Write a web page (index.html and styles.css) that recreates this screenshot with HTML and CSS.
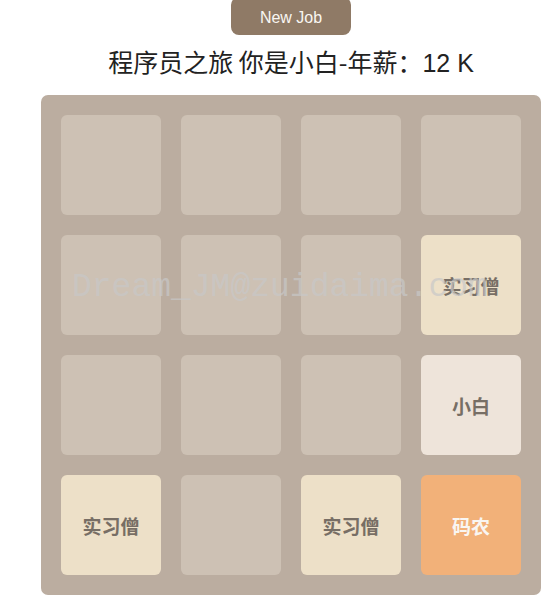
FILE: index.html
```html
<!DOCTYPE html>
<html lang="zh-CN">
<head>
  <meta charset="UTF-8" />
  <meta name="viewport" content="width=device-width, initial-scale=1.0" />
  <title>程序员之旅</title>
  <link rel="stylesheet" href="styles.css">
</head>
<body>
  <div class="game">
    <header>
      <button class="new-job" onclick="newJob()">New Job</button>
      <h1>程序员之旅 你是<span id="rank">小白</span>-年薪：<span class="salary"><span id="salary">12</span> K</span></h1>
    </header>

    <div class="board" id="board">
      <div class="cell"></div>
      <div class="cell"></div>
      <div class="cell"></div>
      <div class="cell"></div>

      <div class="cell"></div>
      <div class="cell"></div>
      <div class="cell"></div>
      <div class="cell tile-4">实习僧</div>

      <div class="cell"></div>
      <div class="cell"></div>
      <div class="cell"></div>
      <div class="cell tile-2">小白</div>

      <div class="cell tile-4">实习僧</div>
      <div class="cell"></div>
      <div class="cell tile-4">实习僧</div>
      <div class="cell tile-8">码农</div>

      <div class="mark">Dream_JM@zuidaima.com</div>
    </div>
  </div>

<script>
  function newJob() {
    document.querySelectorAll(".board .cell").forEach(cell => {
      cell.className = "cell";
      cell.textContent = "";
    });
    document.getElementById("rank").textContent = "小白";
    document.getElementById("salary").textContent = "12";
  }
</script>
</body>
</html>
```

FILE: styles.css
```css
body {
  margin: 0;
  background: #fff;
  font-family: "Liberation Sans", Arial, "Noto Sans CJK SC", sans-serif;
}
.game {
  width: 500px;
  margin-left: 41px;
}
header {
  display: flex;
  flex-direction: column;
  align-items: center;
}
.new-job {
  width: 120px;
  height: 38px;
  margin-top: -3px;
  background: #8f7a66;
  color: #f9f6f2;
  border: none;
  border-radius: 8px;
  font-family: "Liberation Sans", Arial, sans-serif;
  font-size: 16px;
  padding: 3px 0 0;
  cursor: pointer;
}
h1 {
  margin: 11px 0 0;
  font-size: 25px;
  line-height: 30px;
  font-weight: normal;
  color: #222;
  font-family: "Noto Sans CJK SC", sans-serif;
}
.salary {
  font-family: "Liberation Sans", Arial, sans-serif;
}
.board {
  position: relative;
  margin-top: 17px;
  padding: 20px;
  display: grid;
  grid-template-columns: repeat(4, 100px);
  grid-auto-rows: 100px;
  gap: 20px;
  background: #bbada0;
  border-radius: 7px;
}
.cell {
  background: #cdc1b4;
  border-radius: 6px;
  display: flex;
  align-items: center;
  justify-content: center;
  font-family: "Noto Sans CJK SC", serif;
  font-size: 19px;
  font-weight: bold;
  color: #776e65;
}
.tile-2 {
  background: #eee4da;
}
.tile-4 {
  background: #ede0c8;
}
.tile-8 {
  background: #f2b179;
  color: #f9f6f2;
}
.mark {
  position: absolute;
  left: 31px;
  top: 176px;
  font-family: "Liberation Mono", "Courier New", monospace;
  font-size: 33px;
  line-height: 33px;
  color: rgba(200, 200, 200, 0.7);
  white-space: nowrap;
  pointer-events: none;
}
```
